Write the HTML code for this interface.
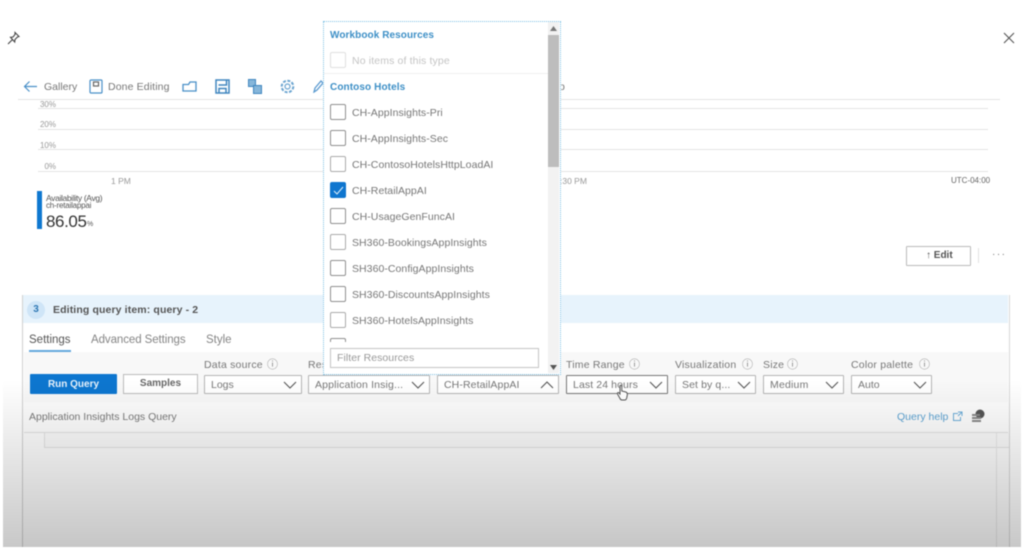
<!DOCTYPE html>
<html><head><meta charset="utf-8"><style>
html,body{margin:0;padding:0;background:#fff}
#r{position:relative;width:1024px;height:552px;overflow:hidden;background:#fff;font-family:"Liberation Sans",sans-serif;color:#555;filter:blur(.6px)}
#r div,#r span.t,#r svg{position:absolute}
.t{position:absolute;white-space:nowrap;font-size:10.5px;line-height:14px;color:#5c5c5c}
.l{height:1px;background:#e4e4e4}
.cb{width:14px;height:14px;left:330px;border:1.5px solid #8f8f8f;border-radius:2px;background:#fff}
.dd{height:17px;top:375px;border:1px solid #b4b4b4;border-radius:1px;background:#fff}
.b{font-weight:bold;color:#666}
.i{color:#888;font-size:11px}
</style></head><body><div id="r">

<svg style="left:6px;top:31px" width="15" height="15" viewBox="0 0 15 15" fill="none" stroke="#444" stroke-width="1.1"><path d="M9 1.5l4 4-1.5.5-2.5 2.5-.3 2.500L4.500 6.300 7 6l2-2.600zM6.500 8.500L2 13"/></svg>
<svg style="left:1003px;top:32px" width="12" height="12" viewBox="0 0 12 12" stroke="#555" stroke-width="1.1"><path d="M1 1l10 10M11 1L1 11"/></svg>

<svg style="left:23px;top:80px" width="15" height="13" viewBox="0 0 15 13" fill="none" stroke="#4a90c8" stroke-width="1.2"><path d="M14 6.500H1.500M6.500 1.500l-5 5 5 5"/></svg>
<span class="t" style="left:44px;top:80px;color:#777">Gallery</span>
<svg style="left:89px;top:79px" width="14" height="15" viewBox="0 0 14 15" fill="none" stroke="#4a90c8" stroke-width="1.2"><rect x="1" y="1" width="12" height="13" rx="1"/><rect x="4.500" y="3" width="5" height="4" stroke="#666"/></svg>
<span class="t" style="left:108px;top:80px;color:#777;letter-spacing:.12px">Done Editing</span>
<svg style="left:182px;top:81px" width="15" height="11" viewBox="0 0 15 11" fill="none" stroke="#4a90c8" stroke-width="1.300"><path d="M1 3.500V10h13V1H8L6.500 3.500z"/></svg>
<svg style="left:215px;top:79px" width="15" height="15" viewBox="0 0 15 15" fill="none" stroke="#3f86bf" stroke-width="1.500"><rect x="1" y="1" width="13" height="13"/><path d="M3.500 6h8V1M4 14V9.500h7V14"/></svg>
<svg style="left:248px;top:79px" width="14" height="15" viewBox="0 0 14 15" fill="#86b6da" stroke="#3f86bf"><rect x=".5" y=".5" width="7" height="7"/><rect x="5.500" y="6.500" width="8" height="8"/></svg>
<svg style="left:280px;top:79px" width="15" height="15" viewBox="0 0 15 15" fill="none" stroke="#6aa4d0" stroke-width="1.200"><circle cx="7.500" cy="7.500" r="2.500"/><circle cx="7.500" cy="7.500" r="5.800" stroke-width="2" stroke-dasharray="3 1.500"/></svg>
<svg style="left:313px;top:80px" width="11" height="13" viewBox="0 0 11 13" fill="none" stroke="#5a9ad0" stroke-width="1.300"><path d="M1 12l1-4 6-7 2 2-6 7z"/></svg>
<span class="t" style="left:559px;top:80px;color:#777">p</span>

<div class="l" style="left:18px;top:99px;width:982px"></div>
<div class="l" style="left:38px;top:108px;width:950px"></div>
<div class="l" style="left:38px;top:129px;width:950px"></div>
<div class="l" style="left:38px;top:149px;width:950px"></div>
<div class="l" style="left:38px;top:171px;width:950px"></div>
<span class="t" style="left:38px;top:98px;font-size:8px;color:#999;width:18px;text-align:right">30%</span>
<span class="t" style="left:38px;top:118px;font-size:8px;color:#999;width:18px;text-align:right">20%</span>
<span class="t" style="left:38px;top:139px;font-size:8px;color:#999;width:18px;text-align:right">10%</span>
<span class="t" style="left:38px;top:160px;font-size:8px;color:#999;width:18px;text-align:right">0%</span>
<span class="t" style="left:111px;top:174px;font-size:8.500px;color:#999">1 PM</span>
<span class="t" style="left:560px;top:174px;font-size:8.500px;color:#999">:30 PM</span>
<span class="t" style="left:951px;top:174px;font-size:8px;color:#666">UTC-04:00</span>

<div style="left:37px;top:191px;width:5px;height:38px;background:#0f78d0"></div>
<span class="t" style="left:46px;top:191px;font-size:8.500px;letter-spacing:-.35px;color:#555">Availability (Avg)</span>
<span class="t" style="left:46px;top:199px;font-size:8px;letter-spacing:-.2px;color:#555">ch-retailappai</span>
<span class="t" style="left:46px;top:213px;font-size:17px;line-height:18px;color:#333;letter-spacing:-.4px">86.05</span>
<span class="t" style="left:87px;top:218px;font-size:7px;color:#555">%</span>

<div style="left:906px;top:246px;width:63px;height:18px;border:1px solid #bbb;border-radius:1px"></div>
<span class="t" style="left:926px;top:249px;font-size:10px;color:#555;font-weight:bold">↑ Edit</span>
<div style="left:978px;top:248px;width:1px;height:15px;background:#e2e2e2"></div>
<span class="t" style="left:992px;top:248px;font-size:10px;letter-spacing:1.500px;color:#777">···</span>

<!-- panel -->
<div style="left:22px;top:295px;width:986px;height:252px;background:#fdfdfd;border-left:1.500px solid #d0d0d0;border-right:1.500px solid #d8d8d8"></div>
<div style="left:23px;top:295px;width:985px;height:28px;background:#e7f3fc"></div>
<div style="left:24px;top:323px;width:984px;height:29px;background:#fff"></div>
<div style="left:27px;top:301px;width:18px;height:18px;border-radius:50%;background:#cfe5f7"></div>
<span class="t" style="left:27px;top:303px;width:18px;text-align:center;font-weight:bold;font-size:10px;color:#2f78b4">3</span>
<span class="t b" style="left:53px;top:303px;font-size:10.500px;color:#555;letter-spacing:.12px">Editing query item: query - 2</span>
<span class="t" style="left:29px;top:333px;font-size:11.500px;color:#555">Settings</span>
<div style="left:29px;top:350px;width:42px;height:2px;background:#64a8dc"></div>
<span class="t" style="left:91px;top:333px;font-size:11.500px;color:#858585;letter-spacing:-.08px">Advanced Settings</span>
<span class="t" style="left:206px;top:333px;font-size:11.500px;color:#858585">Style</span>
<div style="left:24px;top:352px;width:984px;height:50px;background:#f8f8f8"></div>

<span class="t" style="left:204px;top:358px;color:#777;letter-spacing:.2px">Data source</span>
<span class="t i" style="left:267px;top:358px">ⓘ</span>
<span class="t" style="left:308px;top:358px;color:#777;letter-spacing:.2px">Res</span>
<span class="t" style="left:566px;top:358px;color:#777;letter-spacing:.2px">Time Range</span>
<span class="t i" style="left:629px;top:358px">ⓘ</span>
<span class="t" style="left:675px;top:358px;color:#777;letter-spacing:.2px">Visualization</span>
<span class="t i" style="left:742px;top:358px">ⓘ</span>
<span class="t" style="left:763px;top:358px;color:#777;letter-spacing:.2px">Size</span>
<span class="t i" style="left:787px;top:358px">ⓘ</span>
<span class="t" style="left:851px;top:358px;color:#777;letter-spacing:.2px">Color palette</span>
<span class="t i" style="left:919px;top:358px">ⓘ</span>

<div style="left:30px;top:374px;width:87px;height:20px;background:#0d76cf;border-radius:1px"></div>
<span class="t" style="left:30px;top:378px;width:87px;text-align:center;color:#e8f2fb;font-weight:bold;font-size:10px">Run Query</span>
<div style="left:123px;top:374px;width:73px;height:18px;background:#fff;border:1px solid #bbb"></div>
<span class="t" style="left:123px;top:377px;width:75px;text-align:center;color:#666;font-weight:bold;font-size:10px">Samples</span>

<div class="dd" style="left:204px;width:96px"></div><span class="t" style="left:211px;top:378px;color:#777">Logs</span>
<svg style="left:283px;top:381px" width="14" height="8" viewBox="0 0 14 8" fill="none" stroke="#555" stroke-width="1.100"><path d="M1 1l6 6 6-6"/></svg>
<div class="dd" style="left:308px;width:120px"></div><span class="t" style="left:315px;top:378px;color:#777;letter-spacing:.15px">Application Insig...</span>
<svg style="left:411px;top:381px" width="14" height="8" viewBox="0 0 14 8" fill="none" stroke="#555" stroke-width="1.100"><path d="M1 1l6 6 6-6"/></svg>
<div class="dd" style="left:437px;width:120px"></div><span class="t" style="left:444px;top:378px;color:#777;letter-spacing:.1px">CH-RetailAppAI</span>
<svg style="left:540px;top:381px" width="14" height="8" viewBox="0 0 14 8" fill="none" stroke="#555" stroke-width="1.100"><path d="M1 7l6-6 6 6"/></svg>
<div class="dd" style="left:566px;width:100px;border-color:#777"></div><span class="t" style="left:573px;top:378px;color:#777;letter-spacing:.1px">Last 24 hours</span>
<svg style="left:649px;top:381px" width="14" height="8" viewBox="0 0 14 8" fill="none" stroke="#555" stroke-width="1.100"><path d="M1 1l6 6 6-6"/></svg>
<div class="dd" style="left:675px;width:79px"></div><span class="t" style="left:682px;top:378px;color:#777;letter-spacing:.1px">Set by q...</span>
<svg style="left:737px;top:381px" width="14" height="8" viewBox="0 0 14 8" fill="none" stroke="#555" stroke-width="1.100"><path d="M1 1l6 6 6-6"/></svg>
<div class="dd" style="left:763px;width:79px"></div><span class="t" style="left:770px;top:378px;color:#777;letter-spacing:.2px">Medium</span>
<svg style="left:825px;top:381px" width="14" height="8" viewBox="0 0 14 8" fill="none" stroke="#555" stroke-width="1.100"><path d="M1 1l6 6 6-6"/></svg>
<div class="dd" style="left:851px;width:79px"></div><span class="t" style="left:858px;top:378px;color:#777">Auto</span>
<svg style="left:913px;top:381px" width="14" height="8" viewBox="0 0 14 8" fill="none" stroke="#555" stroke-width="1.100"><path d="M1 1l6 6 6-6"/></svg>

<svg style="left:616px;top:384px" width="13" height="17" viewBox="0 0 13 17" fill="#fff" stroke="#555" stroke-width="1"><path d="M4 1.500c1-.6 1.800 0 1.800 1V7l4 1c1.500.5 1.700 1.500 1.500 3l-.6 3c-.3 1.200-1 2-2 2H6c-1 0-1.600-.6-2-1.500L1.500 10c-.6-1 .5-2 1.500-1l1 1z"/></svg>

<span class="t" style="left:29px;top:410px;color:#7a7a7a">Application Insights Logs Query</span>
<span class="t" style="left:897px;top:410px;color:#5da3d2">Query help</span>
<svg style="left:952px;top:411px" width="11" height="11" viewBox="0 0 11 11" fill="none" stroke="#6dadd8"><path d="M6 2.500H1.500v7h7V6M6 1h4v4M10 1L6 5"/></svg>
<svg style="left:971px;top:409px" width="15" height="14" viewBox="0 0 15 14"><circle cx="9" cy="5" r="4.500" fill="#555"/><rect x="1" y="5" width="8" height="2" fill="#888"/><rect x="1" y="8" width="9" height="2" fill="#888"/><rect x="1" y="11" width="9" height="2" fill="#888"/></svg>

<div class="l" style="left:24px;top:432px;width:984px;background:#e0e0e0"></div>
<div style="left:44px;top:433px;width:964px;height:14px;border-bottom:1px solid #e2e2e2;border-left:1px solid #e2e2e2;background:#fafafa"></div>
<div style="left:996px;top:433px;width:1px;height:114px;background:#e8e8e8"></div>

<!-- popup -->
<div style="left:323px;top:21px;width:236px;height:352px;background:#fff;border:1px dotted #7cc0e4"></div>
<div style="left:548px;top:22px;width:11px;height:351px;background:#f2f2f2"></div>
<div style="left:548px;top:35px;width:11px;height:132px;background:#bdbdbd"></div>
<svg style="left:550px;top:26px" width="7" height="5"><path d="M3.500 0L7 5H0z" fill="#777"/></svg>
<svg style="left:550px;top:365px" width="7" height="5"><path d="M3.500 5L7 0H0z" fill="#555"/></svg>

<span class="t" style="left:330px;top:29px;font-weight:bold;font-size:10px;color:#3d8fc6;letter-spacing:.08px">Workbook Resources</span>
<div class="cb" style="top:52px;border-color:#e0e0e0"></div>
<span class="t" style="left:352px;top:54px;color:#c4c4c4;letter-spacing:.13px">No items of this type</span>
<div class="l" style="left:324px;top:73px;width:224px;background:#f0f0f0"></div>
<span class="t" style="left:330px;top:81px;font-weight:bold;font-size:10px;color:#3d8fc6;letter-spacing:.1px">Contoso Hotels</span>

<div class="cb" style="top:104px"></div><span class="t" style="left:352px;top:106px;color:#777;letter-spacing:.05px">CH-AppInsights-Pri</span>
<div class="cb" style="top:130px"></div><span class="t" style="left:352px;top:132px;color:#777;letter-spacing:.05px">CH-AppInsights-Sec</span>
<div class="cb" style="top:156px;border-color:#aaa"></div><span class="t" style="left:352px;top:158px;color:#777;letter-spacing:.05px">CH-ContosoHotelsHttpLoadAI</span>
<div class="cb" style="top:182px;background:#0f76cf;border-color:#0f76cf"></div>
<svg style="left:332px;top:185px" width="13" height="11" viewBox="0 0 13 11" fill="none" stroke="#d8ecfa" stroke-width="1.100"><path d="M2 6l3 3 6-7"/></svg>
<span class="t" style="left:352px;top:184px;color:#777;letter-spacing:.05px">CH-RetailAppAI</span>
<div class="cb" style="top:208px"></div><span class="t" style="left:352px;top:210px;color:#777;letter-spacing:.05px">CH-UsageGenFuncAI</span>
<div class="cb" style="top:234px;border-color:#aaa"></div><span class="t" style="left:352px;top:236px;color:#777;letter-spacing:.05px">SH360-BookingsAppInsights</span>
<div class="cb" style="top:260px"></div><span class="t" style="left:352px;top:262px;color:#777;letter-spacing:.05px">SH360-ConfigAppInsights</span>
<div class="cb" style="top:286px"></div><span class="t" style="left:352px;top:288px;color:#777;letter-spacing:.05px">SH360-DiscountsAppInsights</span>
<div class="cb" style="top:312px;border-color:#aaa"></div><span class="t" style="left:352px;top:314px;color:#777;letter-spacing:.05px">SH360-HotelsAppInsights</span>
<div style="left:330px;top:338px;width:14px;height:3px;border:1.500px solid #8f8f8f;border-bottom:0;border-radius:2px 2px 0 0"></div>
<div style="left:330px;top:348px;width:207px;height:18px;border:1px solid #c4c4c4;background:#fff"></div>
<span class="t" style="left:337px;top:351px;color:#999;letter-spacing:.05px">Filter Resources</span>

<!-- fade -->
<div style="left:3px;top:380px;width:1018px;height:167px;background:linear-gradient(to bottom,rgba(0,0,0,0),rgba(0,0,0,.215))"></div>
</div></body></html>
